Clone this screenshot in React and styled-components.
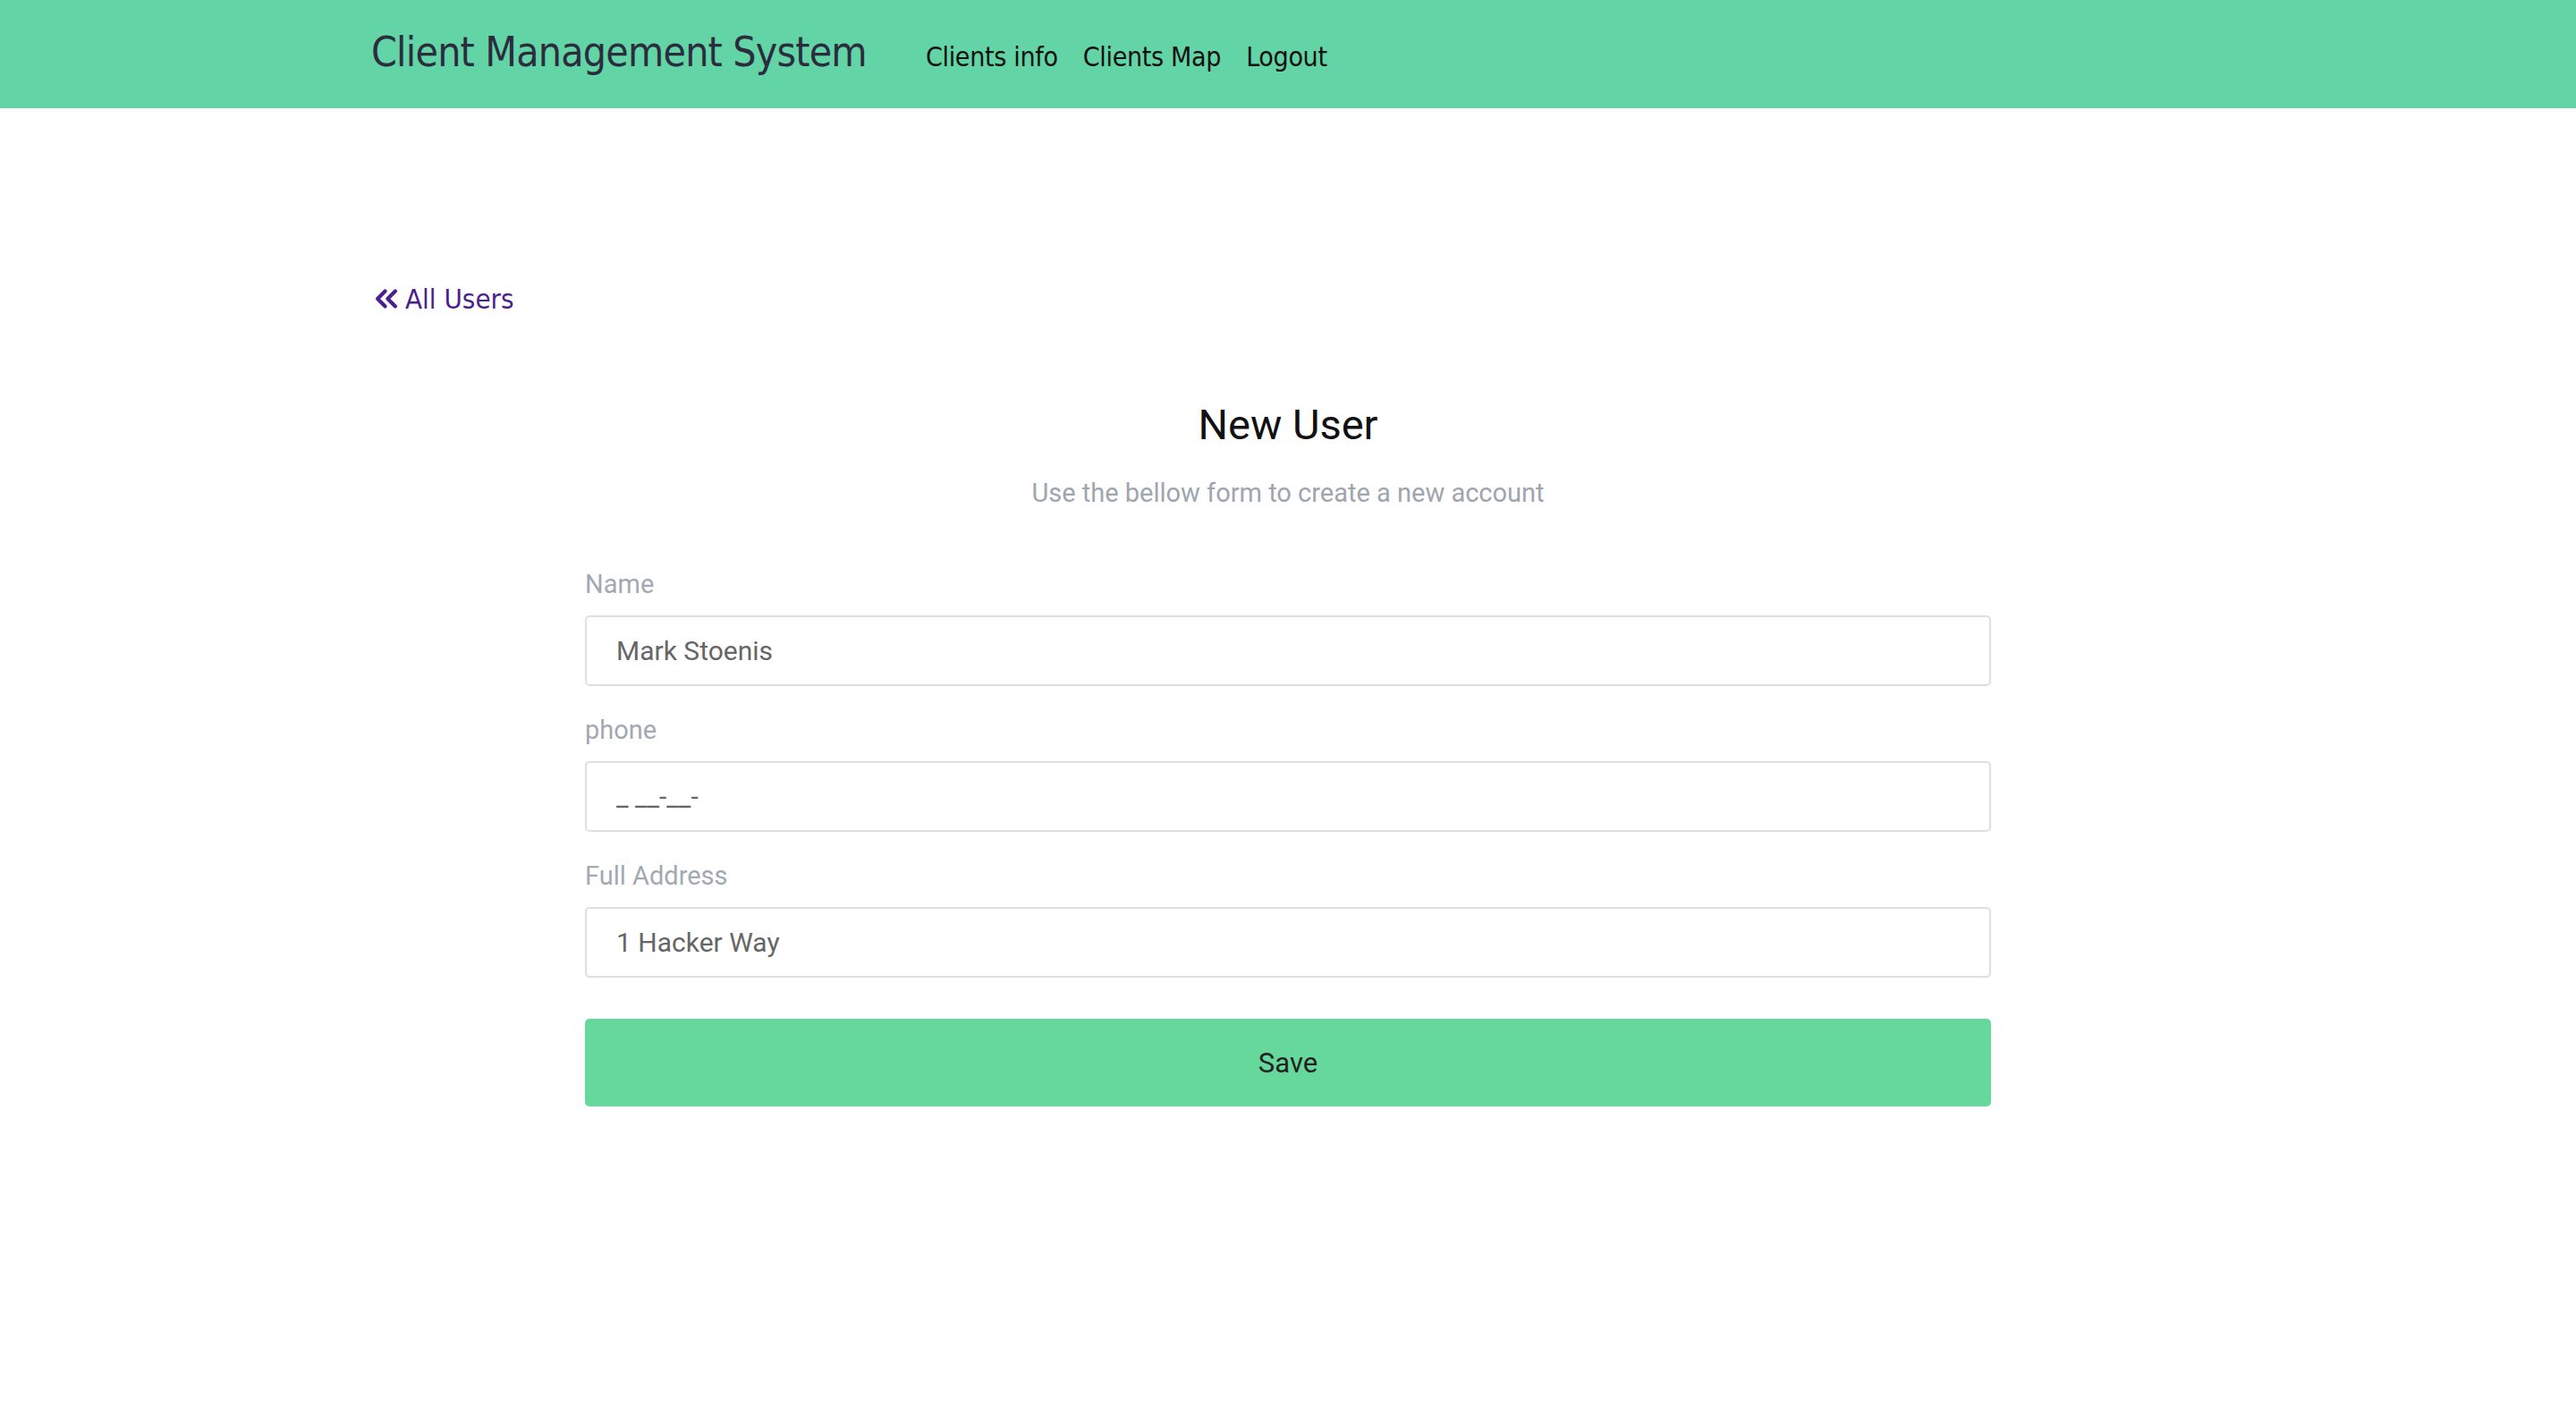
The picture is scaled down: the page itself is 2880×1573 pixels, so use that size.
import React from 'react';
import styled, { createGlobalStyle } from 'styled-components';

const Global = createGlobalStyle`
  body { margin: 0; background: #fff; font-family: Roboto, "Liberation Sans", sans-serif; }
`;

const Header = styled.header`
  height: 121px;
  background: #62d4a5;
  display: flex;
  align-items: center;
  padding-left: 415px;
  gap: 66px;
`;

const Brand = styled.div`
  font-family: "DejaVu Sans Condensed", "DejaVu Sans", sans-serif;
  font-size: 46px;
  color: #2b2d3e;
  letter-spacing: -0.8px;
  margin-top: -6px;
`;

const Nav = styled.nav`
  display: flex;
  gap: 28px;
  margin-top: 6px;
`;

const NavLink = styled.a`
  font-family: "DejaVu Sans Condensed", "DejaVu Sans", sans-serif;
  font-size: 30px;
  letter-spacing: -0.3px;
  color: #111;
  text-decoration: none;
`;

const Main = styled.main`
  padding: 195px 415px 0;
`;

const Back = styled.a`
  display: inline-flex;
  align-items: center;
  gap: 4px;
  font-family: "DejaVu Sans Condensed", "DejaVu Sans", sans-serif;
  font-size: 31px;
  color: #4b1f8c;
  text-decoration: none;
`;

const Form = styled.form`
  width: 1572px;
  margin: 92px auto 0;
  display: flex;
  flex-direction: column;
`;

const Title = styled.h1`
  margin: 0;
  text-align: center;
  font-weight: 400;
  font-size: 47px;
  color: #111;
`;

const Sub = styled.p`
  margin: 32px 0 68px;
  text-align: center;
  font-size: 29px;
  color: #9ea5ae;
`;

const Label = styled.label`
  font-size: 29px;
  color: #a2a9b2;
  margin-bottom: 18px;
`;

const Input = styled.input`
  height: 79px;
  box-sizing: border-box;
  border: 2px solid #dcdfe4;
  border-radius: 5px;
  padding: 0 33px;
  font-family: Roboto, "Liberation Sans", sans-serif;
  font-size: 30px;
  color: #666;
  margin-bottom: 32px;
  outline: none;
`;

const Save = styled.button`
  margin-top: 14px;
  height: 98px;
  border: 0;
  border-radius: 5px;
  background: #66d89b;
  font-family: Roboto, "Liberation Sans", sans-serif;
  font-size: 31px;
  color: #222;
`;

export default function App() {
  return (
    <>
      <Global />
      <Header>
        <Brand>Client Management System</Brand>
        <Nav>
          <NavLink href="#">Clients info</NavLink>
          <NavLink href="#">Clients Map</NavLink>
          <NavLink href="#">Logout</NavLink>
        </Nav>
      </Header>
      <Main>
        <Back href="#">
          <svg width="34" height="34" viewBox="0 0 24 24" fill="none" stroke="#4b1f8c" strokeWidth="3" strokeLinecap="round" strokeLinejoin="round">
            <polyline points="11 18 5 12 11 6" />
            <polyline points="19 18 13 12 19 6" />
          </svg>
          All Users
        </Back>
        <Form onSubmit={e => e.preventDefault()}>
          <Title>New User</Title>
          <Sub>Use the bellow form to create a new account</Sub>
          <Label>Name</Label>
          <Input defaultValue="Mark Stoenis" />
          <Label>phone</Label>
          <Input defaultValue="_ __-__-" />
          <Label>Full Address</Label>
          <Input defaultValue="1 Hacker Way" />
          <Save type="submit">Save</Save>
        </Form>
      </Main>
    </>
  );
}
